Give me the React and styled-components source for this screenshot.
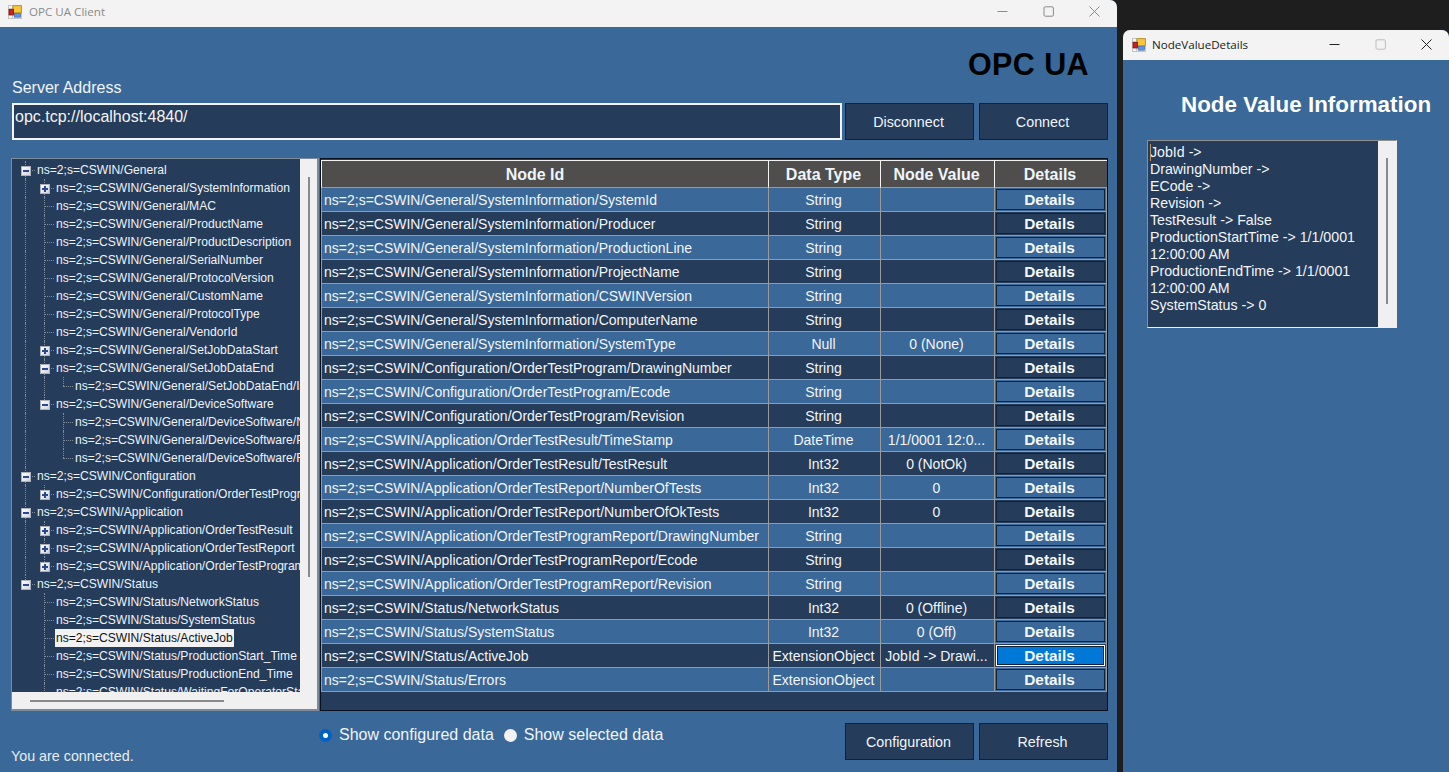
import styled, { createGlobalStyle } from 'styled-components'

const BLUE = '#3a6898'
const NAVY = '#253c5a'
const FONT = '"Liberation Sans", Arial, sans-serif'

const GlobalStyle = createGlobalStyle`
    html, body {
        margin: 0;
        padding: 0;
        height: 100%;
        overflow: hidden;
        background: #1e1e1e;
    }
    #root {
        height: 100%;
    }
`

const Desktop = styled.div`
    position: relative;
    width: 1449px;
    height: 772px;
    overflow: hidden;
    background: #1e1e1e;
    font-family: ${FONT};
    color: #fff;
`

// windows sit on a free desktop canvas
const MainWindow = styled.div`
    position: absolute;
    left: 0;
    top: 0;
    width: 1117px;
    height: 772px;
    background: ${BLUE};
    display: flex;
    flex-direction: column;
    border-top-right-radius: 7px;
    overflow: hidden;
`

const DetailWindow = styled.div`
    position: absolute;
    left: 1123px;
    top: 30px;
    width: 326px;
    height: 742px;
    background: ${BLUE};
    display: flex;
    flex-direction: column;
    border-top-left-radius: 7px;
    border-top-right-radius: 7px;
    overflow: hidden;
`

const TitleBar = styled.div`
    flex: none;
    height: ${(p) => p.$height}px;
    box-sizing: border-box;
    padding-bottom: ${(p) => p.$lift}px;
    background: #f3f3f3;
    display: flex;
    align-items: center;
    padding-left: ${(p) => p.$left}px;
    font-family: "Open Sans", "Noto Sans", sans-serif;
    font-size: 11.6px;
    color: ${(p) => (p.$dim ? '#8a8a8a' : '#1a1a1a')};
`

const TitleText = styled.span`
    margin-left: ${(p) => p.$gap}px;
    flex: 1;
`

const WinButton = styled.div`
    width: ${(p) => p.$width}px;
    height: 100%;
    display: flex;
    align-items: center;
    justify-content: center;
`

const AppIcon = () => (
    <svg width="14" height="14" viewBox="0 0 14 14">
        <rect x="0" y="0" width="14" height="14" fill="#c4c4c4" />
        <path d="M1 1H4V3.5H1ZM1 10.5H4V13H1ZM5 11.5H13V13H5Z" fill="#f4f4f4" />
        <rect x="5" y="0.7" width="8.3" height="7" fill="#f5c63a" stroke="#b58a10" strokeWidth="0.8" />
        <rect x="1" y="4.3" width="4.4" height="5.6" fill="#c92020" stroke="#7c1212" strokeWidth="0.8" />
        <rect x="6.5" y="8.6" width="6" height="3.6" fill="#5f93e0" stroke="#3a66a8" strokeWidth="0.6" />
    </svg>
)

const MinIcon = ({ color }) => (
    <svg width="11" height="11" viewBox="0 0 11 11">
        <path d="M0.5 5.5H10.5" stroke={color} strokeWidth="1" fill="none" />
    </svg>
)

const MaxIcon = ({ color }) => (
    <svg width="11" height="11" viewBox="0 0 11 11">
        <rect x="1" y="0.8" width="9.4" height="9.4" rx="1.2" stroke={color} strokeWidth="1" fill="none" />
    </svg>
)

const CloseIcon = ({ color }) => (
    <svg width="11" height="11" viewBox="0 0 11 11">
        <path d="M0.5 0.5L10.5 10.5M10.5 0.5L0.5 10.5" stroke={color} strokeWidth="1" fill="none" />
    </svg>
)

const MainBody = styled.div`
    flex: 1;
    min-height: 0;
    padding: 0 9px 0 11px;
    display: flex;
    flex-direction: column;
`

const BrandRow = styled.div`
    height: 51px;
    display: flex;
    justify-content: flex-end;
    align-items: flex-end;
    padding-right: 19px;
`

const Brand = styled.div`
    font-size: 30.5px;
    line-height: 34px;
    margin-bottom: -3px;
    font-weight: 700;
    color: #000;
    letter-spacing: 0.4px;
`

const AddressLabel = styled.div`
    height: 25px;
    margin-left: 1px;
    font-size: 16px;
    line-height: 19px;
    color: #f0f4f8;
`

const AddressRow = styled.div`
    height: 37px;
    display: flex;
    margin-left: 1px;
`

const AddressInput = styled.div`
    width: 830px;
    box-sizing: border-box;
    background: ${NAVY};
    border: 2px solid #f4f4f4;
    padding: 2px 1px;
    font-size: 16px;
    line-height: 19px;
    color: #f4f4f4;
`

const ActionButton = styled.div`
    width: 129px;
    height: 37px;
    box-sizing: border-box;
    margin-left: ${(p) => p.$gap}px;
    padding: 1px 2px 0 0;
    background: ${NAVY};
    border: 1px solid #0e2238;
    font-size: 14.3px;
    color: #f0f6fc;
    display: flex;
    align-items: center;
    justify-content: center;
`

const Workspace = styled.div`
    margin-top: 18px;
    height: 553px;
    display: flex;
    gap: 1px;
`

const TreePane = styled.div`
    position: relative;
    width: 308px;
    box-sizing: border-box;
    border: 1px solid #7d8a99;
    border-width: 1px 2px 2px 1px;
    background: #f0f0f0;
    display: grid;
    grid-template-columns: 1fr 17px;
    grid-template-rows: 1fr 17px;
    overflow: hidden;
`

const TreeList = styled.div`
    background: ${NAVY};
    overflow: hidden;
    padding-top: 2px;
    min-width: 0;
`

const TreeRow = styled.div`
    position: relative;
    height: 18px;
    display: flex;
    align-items: center;
    padding-left: ${(p) => 24 + p.$level * 19}px;
    white-space: nowrap;
    font-size: 12.1px;
    color: #eef3f8;
`

const TreeLabel = styled.span`
    padding: 0 1px;
    height: 18px;
    line-height: 18px;
    background: ${(p) => (p.$selected ? '#f2f2f2' : 'transparent')};
    color: ${(p) => (p.$selected ? '#111' : 'inherit')};
`

// dotted tree connectors lie over the rows
const GuideV = styled.span`
    position: absolute;
    left: ${(p) => p.$x - 12}px;
    top: 0;
    height: ${(p) => (p.$half ? '9px' : '18px')};
    border-left: 1px dotted #7f8c9c;
`

const GuideH = styled.span`
    position: absolute;
    left: ${(p) => 13 + p.$level * 19}px;
    top: 9px;
    width: 10px;
    border-top: 1px dotted #7f8c9c;
`

const Toggle = styled.span`
    position: absolute;
    left: ${(p) => 9 + p.$level * 19}px;
    top: 5px;
    width: 10px;
    height: 10px;
    box-sizing: border-box;
    border: 1px solid #aeb2b8;
    background: linear-gradient(135deg, #ffffff, #cfd4df);
    &::before {
        content: '';
        position: absolute;
        left: 1px;
        top: 3px;
        width: 6px;
        height: 2px;
        background: #2a478f;
    }
    &::after {
        content: '';
        display: ${(p) => (p.$open ? 'none' : 'block')};
        position: absolute;
        left: 3px;
        top: 1px;
        width: 2px;
        height: 6px;
        background: #2a478f;
    }
`

const ScrollTrackV = styled.div`
    background: #f0f0f0;
    position: relative;
    &::after {
        content: '';
        position: absolute;
        left: 8px;
        top: 18px;
        height: 400px;
        width: 2px;
        background: #8a8a8a;
    }
`

const ScrollTrackH = styled.div`
    background: #f0f0f0;
    position: relative;
    &::after {
        content: '';
        position: absolute;
        left: 18px;
        top: 8px;
        width: 194px;
        height: 2px;
        background: #8a8a8a;
    }
`

const Corner = styled.div`
    background: #f0f0f0;
`

const GridPane = styled.div`
    flex: 1;
    box-sizing: border-box;
    background: ${NAVY};
    border: 1px solid #08121e;
    padding: 1px 1px 0 0;
    overflow: hidden;
`

const GridTable = styled.div`
    display: grid;
    grid-template-columns: 448px 112px 114px 112px;
`

const HeadCell = styled.div`
    height: 28px;
    box-sizing: border-box;
    background: #4f4e4d;
    border-top: 1px solid #f2f2f2;
    border-right: 1px solid #f2f2f2;
    border-bottom: 1px solid #9a9a9a;
    font-size: 16px;
    font-weight: 700;
    color: #eef4fb;
    display: flex;
    align-items: center;
    justify-content: center;
    padding-top: 1px;
    padding-right: 2px;
    &:first-child {
        border-left: 1px solid #f2f2f2;
        padding-right: 20px;
    }
    &:nth-child(4) {
        border-right: 0;
    }
`

const Cell = styled.div`
    height: 24px;
    box-sizing: border-box;
    background: ${(p) => (p.$dark ? NAVY : BLUE)};
    border-right: 1px solid #9a9a9a;
    border-bottom: 1px solid #9a9a9a;
    border-left: ${(p) => (p.$first ? '1px solid #9a9a9a' : '0')};
    font-size: 14px;
    line-height: 24px;
    color: #f2f5f9;
    text-align: ${(p) => (p.$first ? 'left' : 'center')};
    padding: ${(p) => (p.$first ? '0 0 0 2px' : '0 2px 0 0')};
    white-space: nowrap;
    overflow: hidden;
`

const DetailsCell = styled(Cell)`
    padding: 1px;
    display: flex;
`

const DetailsButton = styled.div`
    flex: 1;
    box-sizing: border-box;
    background: ${(p) => (p.$active ? '#0078d7' : p.$dark ? NAVY : BLUE)};
    border: ${(p) => (p.$active ? '1px solid #fff' : '1px solid #0e2238')};
    outline: ${(p) => (p.$active ? '1px solid #0e2238' : 'none')};
    outline-offset: -2px;
    padding-right: 2px;
    font-size: 15.4px;
    font-weight: 700;
    line-height: 19px;
    text-align: center;
    color: #f4f8fc;
`

const FooterRow = styled.div`
    flex: 1;
    position: relative;
    display: flex;
`

const StatusText = styled.div`
    width: 308px;
    padding-top: 37px;
    font-size: 14.3px;
    line-height: 16px;
    color: #e8edf3;
`

const RadioGroup = styled.div`
    display: flex;
    align-items: center;
    height: 16px;
    margin-top: 16px;
    flex: 1;
    font-size: 16px;
    color: #f0f4f8;
`

const RadioDot = styled.span`
    width: 13px;
    height: 13px;
    box-sizing: border-box;
    border-radius: 50%;
    margin-left: ${(p) => p.$left}px;
    margin-right: 7px;
    background: ${(p) => (p.$on ? '#fff' : '#f2f2f2')};
    border: ${(p) => (p.$on ? '4px solid #0062c0' : '0')};
`

const FooterButtons = styled.div`
    display: flex;
    margin-top: 12px;
    height: 37px;
`

const DetailBody = styled.div`
    flex: 1;
    padding-left: 24px;
`

const DetailHeading = styled.div`
    margin-top: 30px;
    margin-left: 34px;
    font-size: 22.4px;
    line-height: 30px;
    font-weight: 700;
    white-space: nowrap;
    color: #fff;
`

const ValueBox = styled.div`
    margin-top: 20px;
    width: 250px;
    height: 188px;
    box-sizing: border-box;
    border: 1px solid #f0f0f0;
    border-top: 1px solid #8f8f8f;
    border-left: 1px solid #8f8f8f;
    background: #f0f0f0;
    display: flex;
`

const ValueText = styled.div`
    position: relative;
    width: 230px;
    box-sizing: border-box;
    background: ${NAVY};
    padding: 3px 2px;
    font-size: 14.2px;
    line-height: 17px;
    color: #f2f5f9;
    white-space: pre-line;
    &::before {
        content: '';
        position: absolute;
        left: 2px;
        top: 3px;
        width: 1px;
        height: 17px;
        background: #b9935a;
    }
`

const ValueScroll = styled.div`
    flex: 1;
    position: relative;
    &::after {
        content: '';
        position: absolute;
        left: 8px;
        top: 17px;
        height: 146px;
        width: 2px;
        background: #8a8a8a;
    }
`

const TREE = [
    { text: 'ns=2;s=CSWIN/General', level: 0, toggle: 'open', guides: [25] },
    { text: 'ns=2;s=CSWIN/General/SystemInformation', level: 1, toggle: 'closed', guides: [25, 44] },
    { text: 'ns=2;s=CSWIN/General/MAC', level: 1, guides: [25, 44] },
    { text: 'ns=2;s=CSWIN/General/ProductName', level: 1, guides: [25, 44] },
    { text: 'ns=2;s=CSWIN/General/ProductDescription', level: 1, guides: [25, 44] },
    { text: 'ns=2;s=CSWIN/General/SerialNumber', level: 1, guides: [25, 44] },
    { text: 'ns=2;s=CSWIN/General/ProtocolVersion', level: 1, guides: [25, 44] },
    { text: 'ns=2;s=CSWIN/General/CustomName', level: 1, guides: [25, 44] },
    { text: 'ns=2;s=CSWIN/General/ProtocolType', level: 1, guides: [25, 44] },
    { text: 'ns=2;s=CSWIN/General/VendorId', level: 1, guides: [25, 44] },
    { text: 'ns=2;s=CSWIN/General/SetJobDataStart', level: 1, toggle: 'closed', guides: [25, 44] },
    { text: 'ns=2;s=CSWIN/General/SetJobDataEnd', level: 1, toggle: 'open', guides: [25, 44] },
    { text: 'ns=2;s=CSWIN/General/SetJobDataEnd/IsJobDataEnd', level: 2, guides: [25, 44], end: 63 },
    { text: 'ns=2;s=CSWIN/General/DeviceSoftware', level: 1, toggle: 'open', guides: [25], end: 44 },
    { text: 'ns=2;s=CSWIN/General/DeviceSoftware/Name', level: 2, guides: [25, 63] },
    { text: 'ns=2;s=CSWIN/General/DeviceSoftware/ProductCode', level: 2, guides: [25, 63] },
    { text: 'ns=2;s=CSWIN/General/DeviceSoftware/Revision', level: 2, guides: [25], end: 63 },
    { text: 'ns=2;s=CSWIN/Configuration', level: 0, toggle: 'open', guides: [25] },
    { text: 'ns=2;s=CSWIN/Configuration/OrderTestProgram', level: 1, toggle: 'closed', guides: [25], end: 44 },
    { text: 'ns=2;s=CSWIN/Application', level: 0, toggle: 'open', guides: [25] },
    { text: 'ns=2;s=CSWIN/Application/OrderTestResult', level: 1, toggle: 'closed', guides: [25, 44] },
    { text: 'ns=2;s=CSWIN/Application/OrderTestReport', level: 1, toggle: 'closed', guides: [25, 44] },
    { text: 'ns=2;s=CSWIN/Application/OrderTestProgramReport', level: 1, toggle: 'closed', guides: [25], end: 44 },
    { text: 'ns=2;s=CSWIN/Status', level: 0, toggle: 'open', guides: [], end: 25 },
    { text: 'ns=2;s=CSWIN/Status/NetworkStatus', level: 1, guides: [44] },
    { text: 'ns=2;s=CSWIN/Status/SystemStatus', level: 1, guides: [44] },
    { text: 'ns=2;s=CSWIN/Status/ActiveJob', level: 1, guides: [44], selected: true },
    { text: 'ns=2;s=CSWIN/Status/ProductionStart_Time', level: 1, guides: [44] },
    { text: 'ns=2;s=CSWIN/Status/ProductionEnd_Time', level: 1, guides: [44] },
    { text: 'ns=2;s=CSWIN/Status/WaitingForOperatorStart', level: 1, guides: [44] },
]

const NODES = [
    ['ns=2;s=CSWIN/General/SystemInformation/SystemId', 'String', ''],
    ['ns=2;s=CSWIN/General/SystemInformation/Producer', 'String', ''],
    ['ns=2;s=CSWIN/General/SystemInformation/ProductionLine', 'String', ''],
    ['ns=2;s=CSWIN/General/SystemInformation/ProjectName', 'String', ''],
    ['ns=2;s=CSWIN/General/SystemInformation/CSWINVersion', 'String', ''],
    ['ns=2;s=CSWIN/General/SystemInformation/ComputerName', 'String', ''],
    ['ns=2;s=CSWIN/General/SystemInformation/SystemType', 'Null', '0 (None)'],
    ['ns=2;s=CSWIN/Configuration/OrderTestProgram/DrawingNumber', 'String', ''],
    ['ns=2;s=CSWIN/Configuration/OrderTestProgram/Ecode', 'String', ''],
    ['ns=2;s=CSWIN/Configuration/OrderTestProgram/Revision', 'String', ''],
    ['ns=2;s=CSWIN/Application/OrderTestResult/TimeStamp', 'DateTime', '1/1/0001 12:0...'],
    ['ns=2;s=CSWIN/Application/OrderTestResult/TestResult', 'Int32', '0 (NotOk)'],
    ['ns=2;s=CSWIN/Application/OrderTestReport/NumberOfTests', 'Int32', '0'],
    ['ns=2;s=CSWIN/Application/OrderTestReport/NumberOfOkTests', 'Int32', '0'],
    ['ns=2;s=CSWIN/Application/OrderTestProgramReport/DrawingNumber', 'String', ''],
    ['ns=2;s=CSWIN/Application/OrderTestProgramReport/Ecode', 'String', ''],
    ['ns=2;s=CSWIN/Application/OrderTestProgramReport/Revision', 'String', ''],
    ['ns=2;s=CSWIN/Status/NetworkStatus', 'Int32', '0 (Offline)'],
    ['ns=2;s=CSWIN/Status/SystemStatus', 'Int32', '0 (Off)'],
    ['ns=2;s=CSWIN/Status/ActiveJob', 'ExtensionObject', 'JobId -> Drawi...'],
    ['ns=2;s=CSWIN/Status/Errors', 'ExtensionObject', ''],
]

const VALUE_TEXT = `JobId ->
DrawingNumber ->
ECode ->
Revision ->
TestResult -> False
ProductionStartTime -> 1/1/0001
12:00:00 AM
ProductionEndTime -> 1/1/0001
12:00:00 AM
SystemStatus -> 0`

const App = () => {
    return (
        <Desktop>
            <GlobalStyle />
            <MainWindow>
                <TitleBar $height={27} $left={8} $lift={4} $dim>
                    <AppIcon />
                    <TitleText $gap={7}>OPC UA Client</TitleText>
                    <WinButton $width={46}><MinIcon color="#8a8a8a" /></WinButton>
                    <WinButton $width={46}><MaxIcon color="#8a8a8a" /></WinButton>
                    <WinButton $width={46}><CloseIcon color="#8a8a8a" /></WinButton>
                </TitleBar>
                <MainBody>
                    <BrandRow><Brand>OPC UA</Brand></BrandRow>
                    <AddressLabel>Server Address</AddressLabel>
                    <AddressRow>
                        <AddressInput>opc.tcp://localhost:4840/</AddressInput>
                        <ActionButton $gap={3}>Disconnect</ActionButton>
                        <ActionButton $gap={5}>Connect</ActionButton>
                    </AddressRow>
                    <Workspace>
                        <TreePane>
                            <TreeList>
                                {TREE.map((row) => (
                                    <TreeRow key={row.text} $level={row.level}>
                                        {row.guides.map((x) => <GuideV key={x} $x={x} />)}
                                        {row.end && <GuideV $x={row.end} $half />}
                                        <GuideH $level={row.level} />
                                        {row.toggle && <Toggle $level={row.level} $open={row.toggle === 'open'} />}
                                        <TreeLabel $selected={row.selected}>{row.text}</TreeLabel>
                                    </TreeRow>
                                ))}
                            </TreeList>
                            <ScrollTrackV />
                            <ScrollTrackH />
                            <Corner />
                        </TreePane>
                        <GridPane>
                            <GridTable>
                                <HeadCell>Node Id</HeadCell>
                                <HeadCell>Data Type</HeadCell>
                                <HeadCell>Node Value</HeadCell>
                                <HeadCell>Details</HeadCell>
                                {NODES.map((node, i) => {
                                    const dark = i % 2 === 1
                                    return [
                                        <Cell key={node[0]} $first $dark={dark}>{node[0]}</Cell>,
                                        <Cell key={node[0] + 'type'} $dark={dark}>{node[1]}</Cell>,
                                        <Cell key={node[0] + 'value'} $dark={dark}>{node[2]}</Cell>,
                                        <DetailsCell key={node[0] + 'btn'} $dark={dark}>
                                            <DetailsButton $dark={dark} $active={i === 19}>Details</DetailsButton>
                                        </DetailsCell>,
                                    ]
                                })}
                            </GridTable>
                        </GridPane>
                    </Workspace>
                    <FooterRow>
                        <StatusText>You are connected.</StatusText>
                        <RadioGroup>
                            <RadioDot $on $left={0} />
                            Show configured data
                            <RadioDot $left={10} />
                            Show selected data
                        </RadioGroup>
                        <FooterButtons>
                            <ActionButton $gap={0}>Configuration</ActionButton>
                            <ActionButton $gap={5}>Refresh</ActionButton>
                        </FooterButtons>
                    </FooterRow>
                </MainBody>
            </MainWindow>
            <DetailWindow>
                <TitleBar $height={30} $left={9} $lift={1}>
                    <AppIcon />
                    <TitleText $gap={6}>NodeValueDetails</TitleText>
                    <WinButton $width={46}><MinIcon color="#222" /></WinButton>
                    <WinButton $width={46}><MaxIcon color="#bdbdbd" /></WinButton>
                    <WinButton $width={46}><CloseIcon color="#222" /></WinButton>
                </TitleBar>
                <DetailBody>
                    <DetailHeading>Node Value Information</DetailHeading>
                    <ValueBox>
                        <ValueText>{VALUE_TEXT}</ValueText>
                        <ValueScroll />
                    </ValueBox>
                </DetailBody>
            </DetailWindow>
        </Desktop>
    )
}

export default App
